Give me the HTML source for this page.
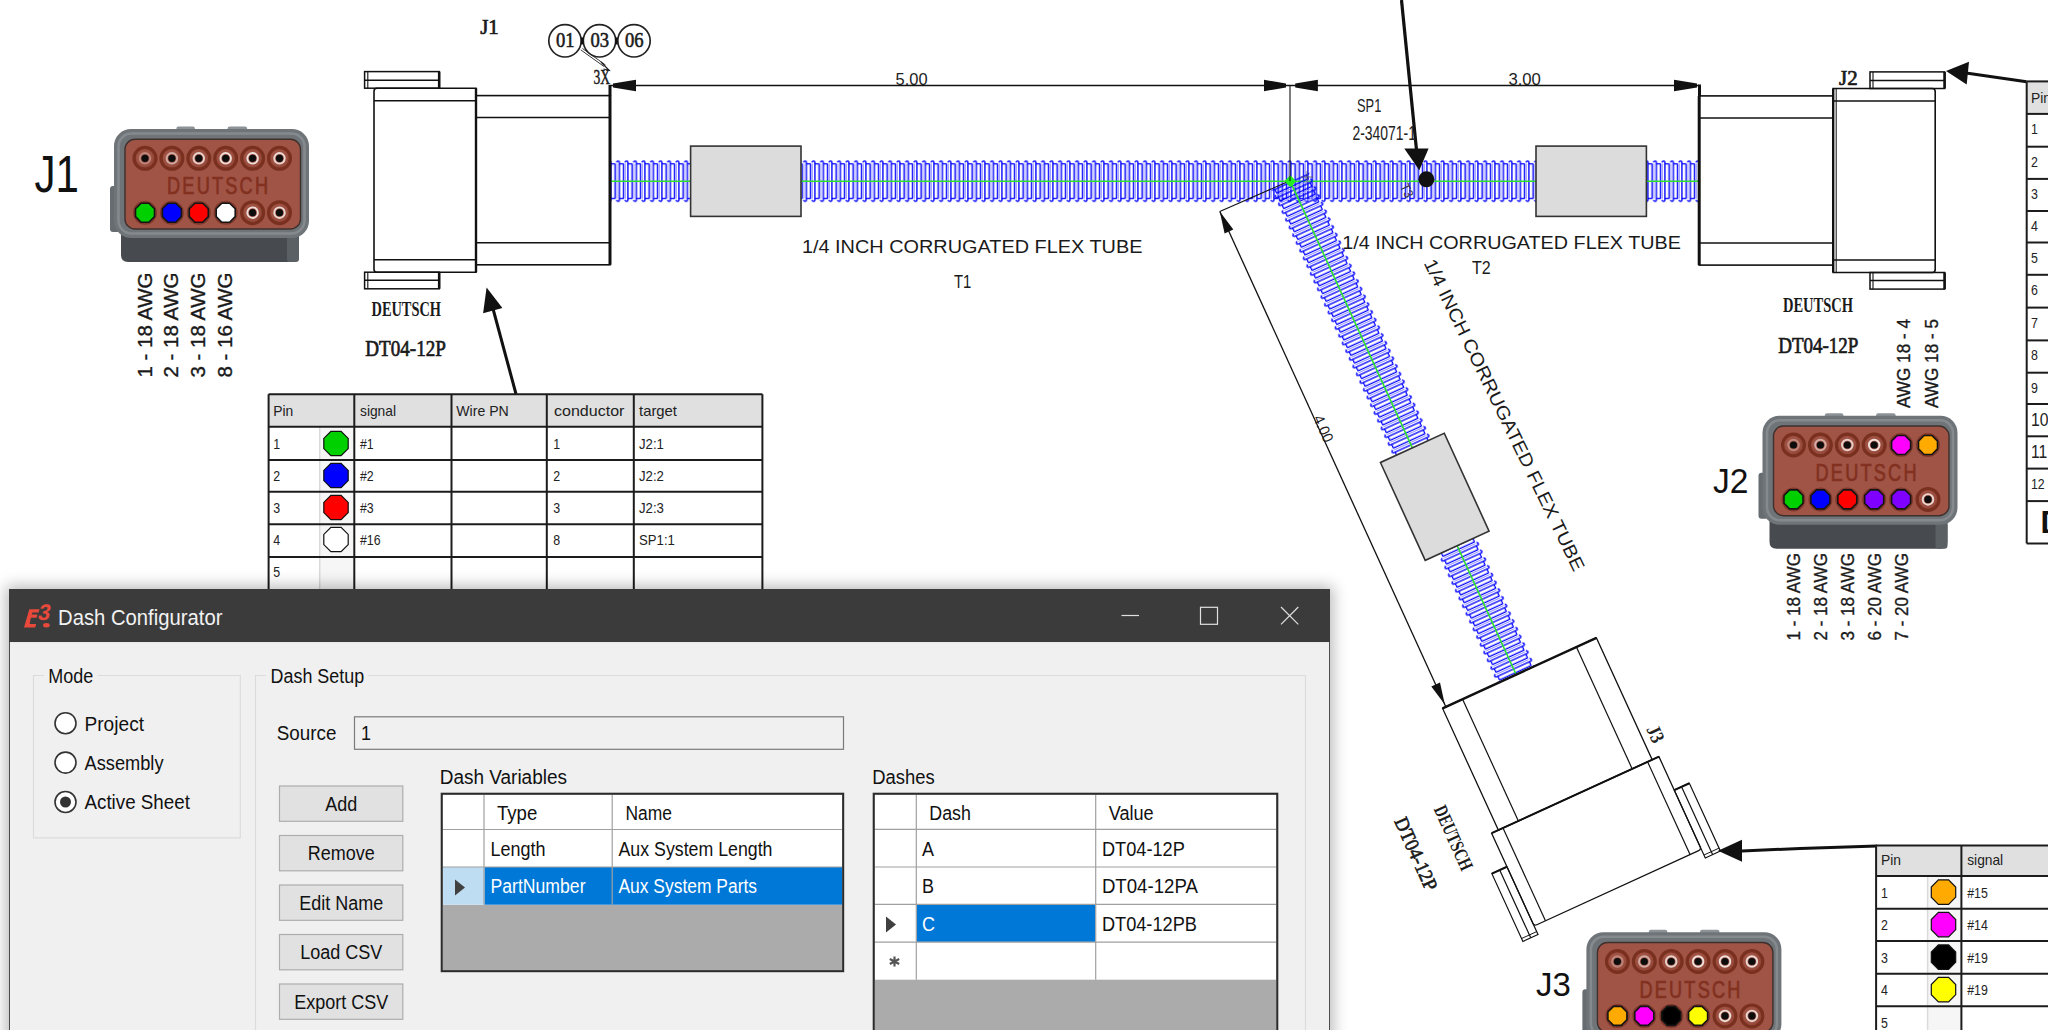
<!DOCTYPE html>
<html><head><meta charset="utf-8"><title>Dash Configurator</title>
<style>
html,body{margin:0;padding:0;background:#fff;width:2048px;height:1030px;overflow:hidden;}
svg{position:absolute;left:0;top:0;}
#dlg{position:absolute;left:9px;top:589px;width:1321px;height:460px;box-shadow:0 0 14px 3px rgba(0,0,0,0.28);background:#f0f0f0;}
</style></head><body>
<svg width="2048" height="1030" viewBox="0 0 2048 1030">
<defs>
<pattern id="corr" width="8.5" height="42" patternUnits="userSpaceOnUse" x="0" y="-21">
 <path d="M0.9,1.2 V40.8 M5.1,3.6 V38.4 M0.9,3.6 H5.1 M0.9,38.4 H5.1" stroke="#0000ff" stroke-width="1.35" fill="none"/>
 <path d="M0.9,1.4 Q-0.8,0.2 -2.2,2.2 M9.4,1.4 Q7.7,0.2 6.3,2.2 M0.9,40.6 Q-0.8,41.8 -2.2,39.8 M9.4,40.6 Q7.7,41.8 6.3,39.8" stroke="#0000ff" stroke-width="1.3" fill="none"/>
 <path d="M6.9,3.5 V38.5" stroke="#9b9bff" stroke-width="1.1"/>
</pattern>
<pattern id="corr3" width="8.5" height="42" patternUnits="userSpaceOnUse" x="0" y="-21">
 <path d="M0.9,1.2 V40.8 M5.1,3.6 V38.4 M0.9,3.6 H5.1 M0.9,38.4 H5.1" stroke="#0000ff" stroke-width="1.3" fill="none"/>
 <path d="M0.9,1.4 Q-0.8,0.2 -2.2,2.2 M9.4,1.4 Q7.7,0.2 6.3,2.2 M0.9,40.6 Q-0.8,41.8 -2.2,39.8 M9.4,40.6 Q7.7,41.8 6.3,39.8" stroke="#0000ff" stroke-width="1.4" fill="none"/>
 <path d="M7.1,3.5 V38.5" stroke="#9a9aff" stroke-width="1"/>
</pattern>
<radialGradient id="holeg" cx="0.45" cy="0.45" r="0.6">
 <stop offset="0" stop-color="#a85a4a"/><stop offset="0.55" stop-color="#9e5142"/><stop offset="1" stop-color="#8a3f30"/>
</radialGradient>
</defs>
<g transform="translate(610,181.2)"><rect x="0" y="-21" width="680.0" height="42" fill="url(#corr)" />
<line x1="0" y1="0" x2="680.0" y2="0" stroke="#2ee02e" stroke-width="1.6"/>
<rect x="80.6" y="-35.1" width="110.4" height="70.3" fill="#dcdcdc" stroke="#333" stroke-width="1.6"/></g>
<g transform="translate(1290,181.2)"><rect x="0" y="-21" width="409.0" height="42" fill="url(#corr)" />
<line x1="0" y1="0" x2="409.0" y2="0" stroke="#2ee02e" stroke-width="1.6"/>
<rect x="246.0" y="-35.1" width="110.4" height="70.3" fill="#dcdcdc" stroke="#333" stroke-width="1.6"/></g>
<g transform="translate(1290.3,181.3) rotate(65.4)"><rect x="0" y="-21" width="543.0" height="42" fill="url(#corr3)" />
<line x1="0" y1="0" x2="543.0" y2="0" stroke="#2ee02e" stroke-width="1.6"/>
<rect x="293.2" y="-35.1" width="107.6" height="70.2" fill="#dcdcdc" stroke="#333" stroke-width="1.6"/></g>
<path d="M1290.3,175.3 L1296.3,181.3 L1290.3,187.3 L1284.3,181.3 Z" fill="#22ee22"/>
<g transform="translate(610,180.2) scale(-1,1)"><rect x="0" y="-84.6" width="134" height="169.2" stroke="#111" fill="none" stroke-width="1.60"/>
<line x1="0" y1="-62.6" x2="134" y2="-62.6" stroke="#111" fill="none" stroke-width="1.50"/>
<line x1="0" y1="62.6" x2="134" y2="62.6" stroke="#111" fill="none" stroke-width="1.50"/>
<path d="M134,-92 H233 Q236,-92 236,-89 V89 Q236,92 233,92 H134 Z" stroke="#111" fill="none" stroke-width="1.60"/>
<line x1="134" y1="-79.5" x2="236" y2="-79.5" stroke="#111" fill="none" stroke-width="1.50"/>
<line x1="134" y1="79.5" x2="236" y2="79.5" stroke="#111" fill="none" stroke-width="1.50"/>
<line x1="134" y1="-92" x2="134" y2="92" stroke="#111" fill="none" stroke-width="2.40"/>
<rect x="170.8" y="-108.6" width="74.6" height="16.599999999999994" stroke="#111" fill="none" stroke-width="1.50"/>
<line x1="242.2" y1="-92" x2="242.2" y2="-108.6" stroke="#111" fill="none" stroke-width="1.10"/>
<line x1="170.8" y1="-92" x2="170.8" y2="-108.6" stroke="#111" fill="none" stroke-width="2.60"/>
<line x1="170.8" y1="-100" x2="245.4" y2="-100" stroke="#111" fill="none" stroke-width="1.50"/>
<rect x="170.8" y="92" width="74.6" height="16.599999999999994" stroke="#111" fill="none" stroke-width="1.50"/>
<line x1="242.2" y1="92" x2="242.2" y2="108.6" stroke="#111" fill="none" stroke-width="1.10"/>
<line x1="170.8" y1="92" x2="170.8" y2="108.6" stroke="#111" fill="none" stroke-width="2.60"/>
<line x1="170.8" y1="100" x2="245.4" y2="100" stroke="#111" fill="none" stroke-width="1.50"/>
<line x1="0" y1="-84.6" x2="0" y2="84.6" stroke="#111" fill="none" stroke-width="3.00"/></g>
<g transform="translate(1699.2,180.5)"><rect x="0" y="-84.6" width="134" height="169.2" stroke="#111" fill="none" stroke-width="1.60"/>
<line x1="0" y1="-62.6" x2="134" y2="-62.6" stroke="#111" fill="none" stroke-width="1.50"/>
<line x1="0" y1="62.6" x2="134" y2="62.6" stroke="#111" fill="none" stroke-width="1.50"/>
<path d="M134,-92 H233 Q236,-92 236,-89 V89 Q236,92 233,92 H134 Z" stroke="#111" fill="none" stroke-width="1.60"/>
<line x1="134" y1="-79.5" x2="236" y2="-79.5" stroke="#111" fill="none" stroke-width="1.50"/>
<line x1="134" y1="79.5" x2="236" y2="79.5" stroke="#111" fill="none" stroke-width="1.50"/>
<line x1="134" y1="-92" x2="134" y2="92" stroke="#111" fill="none" stroke-width="2.40"/>
<line x1="137" y1="-92" x2="137" y2="92" stroke="#111" fill="none" stroke-width="1.00"/>
<rect x="170.8" y="-108.6" width="74.6" height="16.599999999999994" stroke="#111" fill="none" stroke-width="1.50"/>
<line x1="173.8" y1="-92" x2="173.8" y2="-108.6" stroke="#111" fill="none" stroke-width="1.10"/>
<line x1="245.4" y1="-92" x2="245.4" y2="-108.6" stroke="#111" fill="none" stroke-width="2.60"/>
<line x1="170.8" y1="-100" x2="245.4" y2="-100" stroke="#111" fill="none" stroke-width="1.50"/>
<rect x="170.8" y="92" width="74.6" height="16.599999999999994" stroke="#111" fill="none" stroke-width="1.50"/>
<line x1="173.8" y1="92" x2="173.8" y2="108.6" stroke="#111" fill="none" stroke-width="1.10"/>
<line x1="245.4" y1="92" x2="245.4" y2="108.6" stroke="#111" fill="none" stroke-width="2.60"/>
<line x1="170.8" y1="100" x2="245.4" y2="100" stroke="#111" fill="none" stroke-width="1.50"/>
<line x1="0" y1="-84.6" x2="0" y2="84.6" stroke="#111" fill="none" stroke-width="3.00"/></g>
<g transform="translate(1519.5,673.1) rotate(65.4)"><rect x="0" y="-84.6" width="134" height="169.2" stroke="#111" fill="none" stroke-width="1.28"/>
<line x1="0" y1="-62.6" x2="134" y2="-62.6" stroke="#111" fill="none" stroke-width="1.20"/>
<line x1="0" y1="62.6" x2="134" y2="62.6" stroke="#111" fill="none" stroke-width="1.20"/>
<path d="M134,-92 H233 Q236,-92 236,-89 V89 Q236,92 233,92 H134 Z" stroke="#111" fill="none" stroke-width="1.28"/>
<line x1="134" y1="-79.5" x2="236" y2="-79.5" stroke="#111" fill="none" stroke-width="1.20"/>
<line x1="134" y1="79.5" x2="236" y2="79.5" stroke="#111" fill="none" stroke-width="1.20"/>
<line x1="134" y1="-92" x2="134" y2="92" stroke="#111" fill="none" stroke-width="1.92"/>
<rect x="170.8" y="-108.6" width="74.6" height="16.599999999999994" stroke="#111" fill="none" stroke-width="1.20"/>
<line x1="242.2" y1="-92" x2="242.2" y2="-108.6" stroke="#111" fill="none" stroke-width="0.88"/>
<line x1="170.8" y1="-92" x2="170.8" y2="-108.6" stroke="#111" fill="none" stroke-width="2.08"/>
<line x1="170.8" y1="-100" x2="245.4" y2="-100" stroke="#111" fill="none" stroke-width="1.20"/>
<rect x="170.8" y="92" width="74.6" height="16.599999999999994" stroke="#111" fill="none" stroke-width="1.20"/>
<line x1="242.2" y1="92" x2="242.2" y2="108.6" stroke="#111" fill="none" stroke-width="0.88"/>
<line x1="170.8" y1="92" x2="170.8" y2="108.6" stroke="#111" fill="none" stroke-width="2.08"/>
<line x1="170.8" y1="100" x2="245.4" y2="100" stroke="#111" fill="none" stroke-width="1.20"/>
<line x1="0" y1="-84.6" x2="0" y2="84.6" stroke="#111" fill="none" stroke-width="2.40"/></g>
<line x1="610" y1="85.5" x2="1699" y2="85.5" stroke="#111" stroke-width="1.4"/>
<path d="M613.0,83.5 L636.0,79.8 L636.0,91.2 L613.0,87.5 Z" fill="#111"/>
<path d="M1286.0,87.5 L1264.0,91.2 L1264.0,79.8 L1286.0,83.5 Z" fill="#111"/>
<path d="M1295.2,83.5 L1317.9,79.8 L1317.9,91.2 L1295.2,87.5 Z" fill="#111"/>
<path d="M1697.0,87.5 L1674.0,91.2 L1674.0,79.8 L1697.0,83.5 Z" fill="#111"/>
<line x1="1290" y1="85.5" x2="1290" y2="181" stroke="#111" stroke-width="1.1"/>
<line x1="1699.5" y1="84.5" x2="1699.5" y2="96" stroke="#111" stroke-width="3"/>
<line x1="610" y1="85" x2="610" y2="96" stroke="#111" stroke-width="3"/>
<text x="895.6" y="85.0" font-family='"Liberation Sans", sans-serif' font-size="17" fill="#222" textLength="32.0" lengthAdjust="spacingAndGlyphs">5.00</text>
<text x="1508.4" y="85.4" font-family='"Liberation Sans", sans-serif' font-size="17" fill="#222" textLength="32.5" lengthAdjust="spacingAndGlyphs">3.00</text>
<line x1="1286" y1="182.5" x2="1219.8" y2="211.5" stroke="#111" stroke-width="1.1"/>
<line x1="1219.8" y1="211.5" x2="1445.7" y2="706.5" stroke="#111" stroke-width="1.3"/>
<path d="M1219.8,211.5 L1233.3,229.5 L1224.6,233.5 Z" fill="#111"/>
<path d="M1444.8,704.5 L1431.3,686.5 L1440.0,682.5 Z" fill="#111"/>
<text x="0.0" y="0.0" font-family='"Liberation Sans", sans-serif' font-size="15" fill="#222" textLength="28.0" lengthAdjust="spacingAndGlyphs" transform="translate(1313,418) rotate(65.4)">4.00</text>
<line x1="1401.5" y1="0" x2="1416.5" y2="150" stroke="#111" stroke-width="3.2"/>
<path d="M1419.3,170.3 L1404.3,148.5 L1428.6,148.5 Z" fill="#111"/>
<circle cx="1426.4" cy="179.3" r="8" fill="#111"/>
<text x="1357.0" y="111.9" font-family='"Liberation Sans", sans-serif' font-size="19" fill="#222" textLength="24.3" lengthAdjust="spacingAndGlyphs">SP1</text>
<text x="1352.4" y="139.8" font-family='"Liberation Sans", sans-serif' font-size="20" fill="#222" textLength="63.6" lengthAdjust="spacingAndGlyphs">2-34071-1</text>
<text x="0.0" y="0.0" font-family='"Liberation Sans", sans-serif' font-size="13" fill="#333" textLength="14.0" lengthAdjust="spacingAndGlyphs" transform="translate(1400,186) rotate(65.4)">T3</text>
<path d="M1307,171 V183 M1301,177 H1313" stroke="#555" stroke-width="0.8"/>
<text x="801.9" y="252.5" font-family='"Liberation Sans", sans-serif' font-size="18.5" fill="#1a1a1a" textLength="340.6" lengthAdjust="spacingAndGlyphs">1/4 INCH CORRUGATED FLEX TUBE</text>
<text x="954.0" y="287.5" font-family='"Liberation Sans", sans-serif' font-size="18.5" fill="#1a1a1a" textLength="17.3" lengthAdjust="spacingAndGlyphs">T1</text>
<text x="1342.2" y="248.6" font-family='"Liberation Sans", sans-serif' font-size="18.5" fill="#1a1a1a" textLength="338.7" lengthAdjust="spacingAndGlyphs">1/4 INCH CORRUGATED FLEX TUBE</text>
<text x="1472.0" y="274.3" font-family='"Liberation Sans", sans-serif' font-size="18.5" fill="#1a1a1a" textLength="18.7" lengthAdjust="spacingAndGlyphs">T2</text>
<text x="0.0" y="0.0" font-family='"Liberation Sans", sans-serif' font-size="18.5" fill="#1a1a1a" textLength="344.0" lengthAdjust="spacingAndGlyphs" transform="translate(1423.5,263) rotate(64.1)">1/4 INCH CORRUGATED FLEX TUBE</text>
<circle cx="565" cy="40.8" r="16.2" fill="#fff" stroke="#222" stroke-width="1.7"/>
<text x="565.2" y="47.2" font-family='"Liberation Serif", serif' font-size="22" fill="#1a1a1a" textLength="18.6" lengthAdjust="spacingAndGlyphs" text-anchor="middle" stroke="#1a1a1a" stroke-width="0.6">01</text>
<circle cx="599.5" cy="40.8" r="16.2" fill="#fff" stroke="#222" stroke-width="1.7"/>
<text x="599.7" y="47.2" font-family='"Liberation Serif", serif' font-size="22" fill="#1a1a1a" textLength="18.6" lengthAdjust="spacingAndGlyphs" text-anchor="middle" stroke="#1a1a1a" stroke-width="0.6">03</text>
<circle cx="634" cy="40.8" r="16.2" fill="#fff" stroke="#222" stroke-width="1.7"/>
<text x="634.2" y="47.2" font-family='"Liberation Serif", serif' font-size="22" fill="#1a1a1a" textLength="18.6" lengthAdjust="spacingAndGlyphs" text-anchor="middle" stroke="#1a1a1a" stroke-width="0.6">06</text>
<rect x="580.8" y="37.4" width="2.8" height="7" fill="#111"/><rect x="615.2" y="37.4" width="2.5" height="7" fill="#111"/>
<path d="M580.8,49.9 L604,66.5 M582.5,48.5 L605.5,65" stroke="#222" stroke-width="0.9"/><path d="M601,62 L609,70.3 L603.5,69" stroke="#222" stroke-width="1.2" fill="none"/>
<text x="593.4" y="84.2" font-family='"Liberation Serif", serif' font-size="21" fill="#1a1a1a" textLength="16.6" lengthAdjust="spacingAndGlyphs" stroke="#1a1a1a" stroke-width="0.5">3X</text>
<text x="480.2" y="33.7" font-family='"Liberation Serif", serif' font-size="22" fill="#1a1a1a" textLength="18.6" lengthAdjust="spacingAndGlyphs" stroke="#1a1a1a" stroke-width="0.7">J1</text>
<text x="1839.0" y="84.6" font-family='"Liberation Serif", serif' font-size="21" fill="#1a1a1a" textLength="18.6" lengthAdjust="spacingAndGlyphs" stroke="#1a1a1a" stroke-width="0.7">J2</text>
<text x="371.5" y="315.6" font-family='"Liberation Serif", serif' font-size="21.5" font-weight="bold" fill="#1a1a1a" textLength="69.5" lengthAdjust="spacingAndGlyphs">DEUTSCH</text>
<text x="365.3" y="356.4" font-family='"Liberation Serif", serif' font-size="22.5" fill="#1a1a1a" textLength="80.5" lengthAdjust="spacingAndGlyphs" stroke="#1a1a1a" stroke-width="0.7">DT04-12P</text>
<text x="1783.0" y="312.3" font-family='"Liberation Serif", serif' font-size="21.5" font-weight="bold" fill="#1a1a1a" textLength="70.0" lengthAdjust="spacingAndGlyphs">DEUTSCH</text>
<text x="1778.2" y="353.0" font-family='"Liberation Serif", serif' font-size="22.5" fill="#1a1a1a" textLength="80.2" lengthAdjust="spacingAndGlyphs" stroke="#1a1a1a" stroke-width="0.7">DT04-12P</text>
<text x="0.0" y="0.0" font-family='"Liberation Serif", serif' font-size="20" font-weight="bold" fill="#222" textLength="17.0" lengthAdjust="spacingAndGlyphs" transform="translate(1646,729) rotate(65.4)">J3</text>
<text x="0.0" y="0.0" font-family='"Liberation Serif", serif' font-size="19.5" font-weight="bold" fill="#1a1a1a" textLength="69.0" lengthAdjust="spacingAndGlyphs" transform="translate(1433.5,809) rotate(65.8)">DEUTSCH</text>
<text x="0.0" y="0.0" font-family='"Liberation Serif", serif' font-size="20" fill="#1a1a1a" textLength="78.0" lengthAdjust="spacingAndGlyphs" transform="translate(1394,821) rotate(65.8)" stroke="#1a1a1a" stroke-width="0.6">DT04-12P</text>
<line x1="516" y1="394" x2="492" y2="305" stroke="#111" stroke-width="3"/>
<path d="M486.6,287.4 L502.4,308.0 L483.1,313.2 Z" fill="#111"/>
<polyline points="2026.6,81.8 1966,73" fill="none" stroke="#111" stroke-width="3"/>
<path d="M1946.0,70.9 L1969.0,61.7 L1966.7,84.6 Z" fill="#111"/>
<polyline points="1877,846 1800,848.5 1742,851" fill="none" stroke="#111" stroke-width="3"/>
<path d="M1718.0,850.8 L1742.0,839.8 L1742.0,861.8 Z" fill="#111"/>
<g transform="translate(0,0)">
<rect x="176.4" y="126.5" width="18.5" height="7" rx="2" fill="#8d9297"/>
<rect x="227.6" y="126.5" width="19.5" height="7" rx="2" fill="#8d9297"/>
<path d="M121,225 H299 V255 Q299,262 292,262 H128 Q121,262 121,255 Z" fill="#474b4f"/>
<rect x="287" y="236" width="12" height="26" rx="3" fill="#5b6065"/>
<rect x="110" y="186" width="10" height="46" rx="3" fill="#676c71"/>
<rect x="114" y="129" width="195" height="109" rx="17" fill="#6f7479"/>
<rect x="118.5" y="133.5" width="186" height="100" rx="13" fill="none" stroke="#858a8f" stroke-width="2.5"/>
<rect x="125" y="139.3" width="175.5" height="89.7" rx="10" fill="#9f5446" stroke="#3e302d" stroke-width="1.4"/>
<g transform="translate(217.5,194.3) scale(0.74,1)"><text x="0" y="0" font-family='"Liberation Sans", sans-serif' font-size="24.5" fill="#82301f" stroke="#82301f" stroke-width="0.7" text-anchor="middle" textLength="136.5" lengthAdjust="spacing">DEUTSCH</text></g>
<circle cx="145.0" cy="158.3" r="10.9" fill="url(#holeg)" stroke="#79301f" stroke-width="3.2"/>
<circle cx="145.0" cy="158.3" r="5.3" fill="none" stroke="#f3e6e2" stroke-width="1.9" stroke-opacity="0.35"/>
<circle cx="145.0" cy="158.3" r="3.6" fill="#0d0d0d"/>
<circle cx="145.0" cy="212.7" r="12" fill="#80382b"/>
<polygon points="154.5,216.6 148.9,222.2 141.1,222.2 135.5,216.6 135.5,208.8 141.1,203.2 148.9,203.2 154.5,208.8" fill="#00d000" stroke="#141414" stroke-width="1.6" stroke-linejoin="round"/>
<circle cx="171.9" cy="158.3" r="10.9" fill="url(#holeg)" stroke="#79301f" stroke-width="3.2"/>
<circle cx="171.9" cy="158.3" r="5.3" fill="none" stroke="#f3e6e2" stroke-width="1.9" stroke-opacity="0.6"/>
<circle cx="171.9" cy="158.3" r="3.6" fill="#0d0d0d"/>
<circle cx="171.9" cy="212.7" r="12" fill="#80382b"/>
<polygon points="181.4,216.6 175.8,222.2 168.0,222.2 162.4,216.6 162.4,208.8 168.0,203.2 175.8,203.2 181.4,208.8" fill="#0000ff" stroke="#141414" stroke-width="1.6" stroke-linejoin="round"/>
<circle cx="198.8" cy="158.3" r="10.9" fill="url(#holeg)" stroke="#79301f" stroke-width="3.2"/>
<circle cx="198.8" cy="158.3" r="5.3" fill="none" stroke="#f3e6e2" stroke-width="1.9" stroke-opacity="0.85"/>
<circle cx="198.8" cy="158.3" r="3.6" fill="#0d0d0d"/>
<circle cx="198.8" cy="212.7" r="12" fill="#80382b"/>
<polygon points="208.3,216.6 202.7,222.2 194.9,222.2 189.3,216.6 189.3,208.8 194.9,203.2 202.7,203.2 208.3,208.8" fill="#ff0000" stroke="#141414" stroke-width="1.6" stroke-linejoin="round"/>
<circle cx="225.7" cy="158.3" r="10.9" fill="url(#holeg)" stroke="#79301f" stroke-width="3.2"/>
<circle cx="225.7" cy="158.3" r="5.3" fill="none" stroke="#f3e6e2" stroke-width="1.9" stroke-opacity="0.95"/>
<circle cx="225.7" cy="158.3" r="3.6" fill="#0d0d0d"/>
<circle cx="225.7" cy="212.7" r="12" fill="#80382b"/>
<polygon points="235.2,216.6 229.6,222.2 221.8,222.2 216.2,216.6 216.2,208.8 221.8,203.2 229.6,203.2 235.2,208.8" fill="#ffffff" stroke="#141414" stroke-width="1.6" stroke-linejoin="round"/>
<circle cx="252.6" cy="158.3" r="10.9" fill="url(#holeg)" stroke="#79301f" stroke-width="3.2"/>
<circle cx="252.6" cy="158.3" r="5.3" fill="none" stroke="#f3e6e2" stroke-width="1.9" stroke-opacity="0.95"/>
<circle cx="252.6" cy="158.3" r="3.6" fill="#0d0d0d"/>
<circle cx="252.6" cy="212.7" r="10.9" fill="url(#holeg)" stroke="#79301f" stroke-width="3.2"/>
<circle cx="252.6" cy="212.7" r="5.3" fill="none" stroke="#f3e6e2" stroke-width="1.9" stroke-opacity="0.95"/>
<circle cx="252.6" cy="212.7" r="3.6" fill="#0d0d0d"/>
<circle cx="279.5" cy="158.3" r="10.9" fill="url(#holeg)" stroke="#79301f" stroke-width="3.2"/>
<circle cx="279.5" cy="158.3" r="5.3" fill="none" stroke="#f3e6e2" stroke-width="1.9" stroke-opacity="0.9"/>
<circle cx="279.5" cy="158.3" r="3.6" fill="#0d0d0d"/>
<circle cx="279.5" cy="212.7" r="10.9" fill="url(#holeg)" stroke="#79301f" stroke-width="3.2"/>
<circle cx="279.5" cy="212.7" r="5.3" fill="none" stroke="#f3e6e2" stroke-width="1.9" stroke-opacity="0.9"/>
<circle cx="279.5" cy="212.7" r="3.6" fill="#0d0d0d"/>
</g>
<g transform="translate(1648.5,286.7)">
<rect x="176.4" y="126.5" width="18.5" height="7" rx="2" fill="#8d9297"/>
<rect x="227.6" y="126.5" width="19.5" height="7" rx="2" fill="#8d9297"/>
<path d="M121,225 H299 V255 Q299,262 292,262 H128 Q121,262 121,255 Z" fill="#474b4f"/>
<rect x="287" y="236" width="12" height="26" rx="3" fill="#5b6065"/>
<rect x="110" y="186" width="10" height="46" rx="3" fill="#676c71"/>
<rect x="114" y="129" width="195" height="109" rx="17" fill="#6f7479"/>
<rect x="118.5" y="133.5" width="186" height="100" rx="13" fill="none" stroke="#858a8f" stroke-width="2.5"/>
<rect x="125" y="139.3" width="175.5" height="89.7" rx="10" fill="#9f5446" stroke="#3e302d" stroke-width="1.4"/>
<g transform="translate(217.5,194.3) scale(0.74,1)"><text x="0" y="0" font-family='"Liberation Sans", sans-serif' font-size="24.5" fill="#82301f" stroke="#82301f" stroke-width="0.7" text-anchor="middle" textLength="136.5" lengthAdjust="spacing">DEUTSCH</text></g>
<circle cx="145.0" cy="158.3" r="10.9" fill="url(#holeg)" stroke="#79301f" stroke-width="3.2"/>
<circle cx="145.0" cy="158.3" r="5.3" fill="none" stroke="#f3e6e2" stroke-width="1.9" stroke-opacity="0.35"/>
<circle cx="145.0" cy="158.3" r="3.6" fill="#0d0d0d"/>
<circle cx="145.0" cy="212.7" r="12" fill="#80382b"/>
<polygon points="154.5,216.6 148.9,222.2 141.1,222.2 135.5,216.6 135.5,208.8 141.1,203.2 148.9,203.2 154.5,208.8" fill="#00d000" stroke="#141414" stroke-width="1.6" stroke-linejoin="round"/>
<circle cx="171.9" cy="158.3" r="10.9" fill="url(#holeg)" stroke="#79301f" stroke-width="3.2"/>
<circle cx="171.9" cy="158.3" r="5.3" fill="none" stroke="#f3e6e2" stroke-width="1.9" stroke-opacity="0.6"/>
<circle cx="171.9" cy="158.3" r="3.6" fill="#0d0d0d"/>
<circle cx="171.9" cy="212.7" r="12" fill="#80382b"/>
<polygon points="181.4,216.6 175.8,222.2 168.0,222.2 162.4,216.6 162.4,208.8 168.0,203.2 175.8,203.2 181.4,208.8" fill="#0000ff" stroke="#141414" stroke-width="1.6" stroke-linejoin="round"/>
<circle cx="198.8" cy="158.3" r="10.9" fill="url(#holeg)" stroke="#79301f" stroke-width="3.2"/>
<circle cx="198.8" cy="158.3" r="5.3" fill="none" stroke="#f3e6e2" stroke-width="1.9" stroke-opacity="0.85"/>
<circle cx="198.8" cy="158.3" r="3.6" fill="#0d0d0d"/>
<circle cx="198.8" cy="212.7" r="12" fill="#80382b"/>
<polygon points="208.3,216.6 202.7,222.2 194.9,222.2 189.3,216.6 189.3,208.8 194.9,203.2 202.7,203.2 208.3,208.8" fill="#ff0000" stroke="#141414" stroke-width="1.6" stroke-linejoin="round"/>
<circle cx="225.7" cy="158.3" r="10.9" fill="url(#holeg)" stroke="#79301f" stroke-width="3.2"/>
<circle cx="225.7" cy="158.3" r="5.3" fill="none" stroke="#f3e6e2" stroke-width="1.9" stroke-opacity="0.95"/>
<circle cx="225.7" cy="158.3" r="3.6" fill="#0d0d0d"/>
<circle cx="225.7" cy="212.7" r="12" fill="#80382b"/>
<polygon points="235.2,216.6 229.6,222.2 221.8,222.2 216.2,216.6 216.2,208.8 221.8,203.2 229.6,203.2 235.2,208.8" fill="#8000ff" stroke="#141414" stroke-width="1.6" stroke-linejoin="round"/>
<circle cx="252.6" cy="158.3" r="12" fill="#80382b"/>
<polygon points="262.1,162.2 256.5,167.8 248.7,167.8 243.1,162.2 243.1,154.4 248.7,148.8 256.5,148.8 262.1,154.4" fill="#ff00ff" stroke="#141414" stroke-width="1.6" stroke-linejoin="round"/>
<circle cx="252.6" cy="212.7" r="12" fill="#80382b"/>
<polygon points="262.1,216.6 256.5,222.2 248.7,222.2 243.1,216.6 243.1,208.8 248.7,203.2 256.5,203.2 262.1,208.8" fill="#8000ff" stroke="#141414" stroke-width="1.6" stroke-linejoin="round"/>
<circle cx="279.5" cy="158.3" r="12" fill="#80382b"/>
<polygon points="289.0,162.2 283.4,167.8 275.6,167.8 270.0,162.2 270.0,154.4 275.6,148.8 283.4,148.8 289.0,154.4" fill="#ffaa00" stroke="#141414" stroke-width="1.6" stroke-linejoin="round"/>
<circle cx="279.5" cy="212.7" r="10.9" fill="url(#holeg)" stroke="#79301f" stroke-width="3.2"/>
<circle cx="279.5" cy="212.7" r="5.3" fill="none" stroke="#f3e6e2" stroke-width="1.9" stroke-opacity="0.9"/>
<circle cx="279.5" cy="212.7" r="3.6" fill="#0d0d0d"/>
</g>
<g transform="translate(1472.4,803.2)">
<rect x="176.4" y="126.5" width="18.5" height="7" rx="2" fill="#8d9297"/>
<rect x="227.6" y="126.5" width="19.5" height="7" rx="2" fill="#8d9297"/>
<path d="M121,225 H299 V255 Q299,262 292,262 H128 Q121,262 121,255 Z" fill="#474b4f"/>
<rect x="287" y="236" width="12" height="26" rx="3" fill="#5b6065"/>
<rect x="110" y="186" width="10" height="46" rx="3" fill="#676c71"/>
<rect x="114" y="129" width="195" height="109" rx="17" fill="#6f7479"/>
<rect x="118.5" y="133.5" width="186" height="100" rx="13" fill="none" stroke="#858a8f" stroke-width="2.5"/>
<rect x="125" y="139.3" width="175.5" height="89.7" rx="10" fill="#9f5446" stroke="#3e302d" stroke-width="1.4"/>
<g transform="translate(217.5,194.3) scale(0.74,1)"><text x="0" y="0" font-family='"Liberation Sans", sans-serif' font-size="24.5" fill="#82301f" stroke="#82301f" stroke-width="0.7" text-anchor="middle" textLength="136.5" lengthAdjust="spacing">DEUTSCH</text></g>
<circle cx="145.0" cy="158.3" r="10.9" fill="url(#holeg)" stroke="#79301f" stroke-width="3.2"/>
<circle cx="145.0" cy="158.3" r="5.3" fill="none" stroke="#f3e6e2" stroke-width="1.9" stroke-opacity="0.35"/>
<circle cx="145.0" cy="158.3" r="3.6" fill="#0d0d0d"/>
<circle cx="145.0" cy="212.7" r="12" fill="#80382b"/>
<polygon points="154.5,216.6 148.9,222.2 141.1,222.2 135.5,216.6 135.5,208.8 141.1,203.2 148.9,203.2 154.5,208.8" fill="#ffaa00" stroke="#141414" stroke-width="1.6" stroke-linejoin="round"/>
<circle cx="171.9" cy="158.3" r="10.9" fill="url(#holeg)" stroke="#79301f" stroke-width="3.2"/>
<circle cx="171.9" cy="158.3" r="5.3" fill="none" stroke="#f3e6e2" stroke-width="1.9" stroke-opacity="0.6"/>
<circle cx="171.9" cy="158.3" r="3.6" fill="#0d0d0d"/>
<circle cx="171.9" cy="212.7" r="12" fill="#80382b"/>
<polygon points="181.4,216.6 175.8,222.2 168.0,222.2 162.4,216.6 162.4,208.8 168.0,203.2 175.8,203.2 181.4,208.8" fill="#ff00ff" stroke="#141414" stroke-width="1.6" stroke-linejoin="round"/>
<circle cx="198.8" cy="158.3" r="10.9" fill="url(#holeg)" stroke="#79301f" stroke-width="3.2"/>
<circle cx="198.8" cy="158.3" r="5.3" fill="none" stroke="#f3e6e2" stroke-width="1.9" stroke-opacity="0.85"/>
<circle cx="198.8" cy="158.3" r="3.6" fill="#0d0d0d"/>
<circle cx="198.8" cy="212.7" r="12" fill="#80382b"/>
<polygon points="208.3,216.6 202.7,222.2 194.9,222.2 189.3,216.6 189.3,208.8 194.9,203.2 202.7,203.2 208.3,208.8" fill="#000000" stroke="#141414" stroke-width="1.6" stroke-linejoin="round"/>
<circle cx="225.7" cy="158.3" r="10.9" fill="url(#holeg)" stroke="#79301f" stroke-width="3.2"/>
<circle cx="225.7" cy="158.3" r="5.3" fill="none" stroke="#f3e6e2" stroke-width="1.9" stroke-opacity="0.95"/>
<circle cx="225.7" cy="158.3" r="3.6" fill="#0d0d0d"/>
<circle cx="225.7" cy="212.7" r="12" fill="#80382b"/>
<polygon points="235.2,216.6 229.6,222.2 221.8,222.2 216.2,216.6 216.2,208.8 221.8,203.2 229.6,203.2 235.2,208.8" fill="#ffff00" stroke="#141414" stroke-width="1.6" stroke-linejoin="round"/>
<circle cx="252.6" cy="158.3" r="10.9" fill="url(#holeg)" stroke="#79301f" stroke-width="3.2"/>
<circle cx="252.6" cy="158.3" r="5.3" fill="none" stroke="#f3e6e2" stroke-width="1.9" stroke-opacity="0.95"/>
<circle cx="252.6" cy="158.3" r="3.6" fill="#0d0d0d"/>
<circle cx="252.6" cy="212.7" r="10.9" fill="url(#holeg)" stroke="#79301f" stroke-width="3.2"/>
<circle cx="252.6" cy="212.7" r="5.3" fill="none" stroke="#f3e6e2" stroke-width="1.9" stroke-opacity="0.95"/>
<circle cx="252.6" cy="212.7" r="3.6" fill="#0d0d0d"/>
<circle cx="279.5" cy="158.3" r="10.9" fill="url(#holeg)" stroke="#79301f" stroke-width="3.2"/>
<circle cx="279.5" cy="158.3" r="5.3" fill="none" stroke="#f3e6e2" stroke-width="1.9" stroke-opacity="0.9"/>
<circle cx="279.5" cy="158.3" r="3.6" fill="#0d0d0d"/>
<circle cx="279.5" cy="212.7" r="10.9" fill="url(#holeg)" stroke="#79301f" stroke-width="3.2"/>
<circle cx="279.5" cy="212.7" r="5.3" fill="none" stroke="#f3e6e2" stroke-width="1.9" stroke-opacity="0.9"/>
<circle cx="279.5" cy="212.7" r="3.6" fill="#0d0d0d"/>
</g>
<text x="34.5" y="191.5" font-family='"Liberation Sans", sans-serif' font-size="51.5" fill="#111" textLength="44.5" lengthAdjust="spacingAndGlyphs">J1</text>
<text x="1713.0" y="492.6" font-family='"Liberation Sans", sans-serif' font-size="35.5" fill="#111" textLength="35.5" lengthAdjust="spacingAndGlyphs">J2</text>
<text x="1536.0" y="996.0" font-family='"Liberation Sans", sans-serif' font-size="33" fill="#111" textLength="34.8" lengthAdjust="spacingAndGlyphs">J3</text>
<text x="0.0" y="0.0" font-family='"Liberation Sans", sans-serif' font-size="20.5" fill="#1a1a1a" textLength="105.0" lengthAdjust="spacingAndGlyphs" transform="translate(151.6,377.5) rotate(-90)" stroke="#1a1a1a" stroke-width="0.35">1 - 18 AWG</text>
<text x="0.0" y="0.0" font-family='"Liberation Sans", sans-serif' font-size="20.5" fill="#1a1a1a" textLength="105.0" lengthAdjust="spacingAndGlyphs" transform="translate(178.3,377.5) rotate(-90)" stroke="#1a1a1a" stroke-width="0.35">2 - 18 AWG</text>
<text x="0.0" y="0.0" font-family='"Liberation Sans", sans-serif' font-size="20.5" fill="#1a1a1a" textLength="105.0" lengthAdjust="spacingAndGlyphs" transform="translate(205.0,377.5) rotate(-90)" stroke="#1a1a1a" stroke-width="0.35">3 - 18 AWG</text>
<text x="0.0" y="0.0" font-family='"Liberation Sans", sans-serif' font-size="20.5" fill="#1a1a1a" textLength="105.0" lengthAdjust="spacingAndGlyphs" transform="translate(231.7,377.5) rotate(-90)" stroke="#1a1a1a" stroke-width="0.35">8 - 16 AWG</text>
<text x="0.0" y="0.0" font-family='"Liberation Sans", sans-serif' font-size="18" fill="#1a1a1a" textLength="87.4" lengthAdjust="spacingAndGlyphs" transform="translate(1800.3,640.5) rotate(-90)" stroke="#1a1a1a" stroke-width="0.35">1 - 18 AWG</text>
<text x="0.0" y="0.0" font-family='"Liberation Sans", sans-serif' font-size="18" fill="#1a1a1a" textLength="87.4" lengthAdjust="spacingAndGlyphs" transform="translate(1827.2,640.5) rotate(-90)" stroke="#1a1a1a" stroke-width="0.35">2 - 18 AWG</text>
<text x="0.0" y="0.0" font-family='"Liberation Sans", sans-serif' font-size="18" fill="#1a1a1a" textLength="87.4" lengthAdjust="spacingAndGlyphs" transform="translate(1854.1,640.5) rotate(-90)" stroke="#1a1a1a" stroke-width="0.35">3 - 18 AWG</text>
<text x="0.0" y="0.0" font-family='"Liberation Sans", sans-serif' font-size="18" fill="#1a1a1a" textLength="87.4" lengthAdjust="spacingAndGlyphs" transform="translate(1881.0,640.5) rotate(-90)" stroke="#1a1a1a" stroke-width="0.35">6 - 20 AWG</text>
<text x="0.0" y="0.0" font-family='"Liberation Sans", sans-serif' font-size="18" fill="#1a1a1a" textLength="87.4" lengthAdjust="spacingAndGlyphs" transform="translate(1907.9,640.5) rotate(-90)" stroke="#1a1a1a" stroke-width="0.35">7 - 20 AWG</text>
<text x="0.0" y="0.0" font-family='"Liberation Sans", sans-serif' font-size="18" fill="#1a1a1a" textLength="89.0" lengthAdjust="spacingAndGlyphs" transform="translate(1910.2,408.0) rotate(-90)" stroke="#1a1a1a" stroke-width="0.35">AWG 18 - 4</text>
<text x="0.0" y="0.0" font-family='"Liberation Sans", sans-serif' font-size="18" fill="#1a1a1a" textLength="89.0" lengthAdjust="spacingAndGlyphs" transform="translate(1937.5,408.0) rotate(-90)" stroke="#1a1a1a" stroke-width="0.35">AWG 18 - 5</text>
<rect x="268.6" y="394.2" width="493.79999999999995" height="32.60000000000002" fill="#e0e0e0"/>
<rect x="320" y="427.5" width="34" height="162" fill="#f6f6f6"/>
<line x1="319.7" y1="427" x2="319.7" y2="589" stroke="#dadada" stroke-width="1.5"/>
<line x1="268.6" y1="394.2" x2="762.4" y2="394.2" stroke="#1c1c1c" stroke-width="2"/>
<line x1="268.6" y1="426.8" x2="762.4" y2="426.8" stroke="#1c1c1c" stroke-width="2"/>
<line x1="268.6" y1="460" x2="762.4" y2="460" stroke="#1c1c1c" stroke-width="2"/>
<line x1="268.6" y1="491.8" x2="762.4" y2="491.8" stroke="#1c1c1c" stroke-width="2"/>
<line x1="268.6" y1="524.2" x2="762.4" y2="524.2" stroke="#1c1c1c" stroke-width="2"/>
<line x1="268.6" y1="557" x2="762.4" y2="557" stroke="#1c1c1c" stroke-width="2"/>
<line x1="268.6" y1="394.2" x2="268.6" y2="589" stroke="#1c1c1c" stroke-width="2"/>
<line x1="354.3" y1="394.2" x2="354.3" y2="589" stroke="#1c1c1c" stroke-width="2"/>
<line x1="451.5" y1="394.2" x2="451.5" y2="589" stroke="#1c1c1c" stroke-width="2"/>
<line x1="546.8" y1="394.2" x2="546.8" y2="589" stroke="#1c1c1c" stroke-width="2"/>
<line x1="633.8" y1="394.2" x2="633.8" y2="589" stroke="#1c1c1c" stroke-width="2"/>
<line x1="762.4" y1="394.2" x2="762.4" y2="589" stroke="#1c1c1c" stroke-width="2"/>
<text x="273.3" y="416.2" font-family='"Liberation Sans", sans-serif' font-size="14.5" fill="#222" textLength="20.0" lengthAdjust="spacingAndGlyphs">Pin</text>
<text x="360.0" y="416.2" font-family='"Liberation Sans", sans-serif' font-size="14.5" fill="#222" textLength="36.0" lengthAdjust="spacingAndGlyphs">signal</text>
<text x="456.3" y="416.2" font-family='"Liberation Sans", sans-serif' font-size="14.5" fill="#222" textLength="52.5" lengthAdjust="spacingAndGlyphs">Wire PN</text>
<text x="554.0" y="416.2" font-family='"Liberation Sans", sans-serif' font-size="14.5" fill="#222" textLength="70.4" lengthAdjust="spacingAndGlyphs">conductor</text>
<text x="639.0" y="416.2" font-family='"Liberation Sans", sans-serif' font-size="14.5" fill="#222" textLength="38.0" lengthAdjust="spacingAndGlyphs">target</text>
<text x="273.3" y="448.6" font-family='"Liberation Sans", sans-serif' font-size="14.5" fill="#222" textLength="6.9" lengthAdjust="spacingAndGlyphs">1</text>
<polygon points="348.2,448.6 341.1,455.7 330.9,455.7 323.8,448.6 323.8,438.4 330.9,431.3 341.1,431.3 348.2,438.4" fill="#00d000" stroke="#111" stroke-width="1.2"/>
<text x="360.0" y="448.6" font-family='"Liberation Sans", sans-serif' font-size="14.5" fill="#222" textLength="13.7" lengthAdjust="spacingAndGlyphs">#1</text>
<text x="553.3" y="448.6" font-family='"Liberation Sans", sans-serif' font-size="14.5" fill="#222" textLength="6.9" lengthAdjust="spacingAndGlyphs">1</text>
<text x="639.0" y="448.6" font-family='"Liberation Sans", sans-serif' font-size="15.5" fill="#222" textLength="24.9" lengthAdjust="spacingAndGlyphs">J2:1</text>
<text x="273.3" y="480.6" font-family='"Liberation Sans", sans-serif' font-size="14.5" fill="#222" textLength="6.9" lengthAdjust="spacingAndGlyphs">2</text>
<polygon points="348.2,480.6 341.1,487.7 330.9,487.7 323.8,480.6 323.8,470.4 330.9,463.3 341.1,463.3 348.2,470.4" fill="#0000ff" stroke="#111" stroke-width="1.2"/>
<text x="360.0" y="480.6" font-family='"Liberation Sans", sans-serif' font-size="14.5" fill="#222" textLength="13.7" lengthAdjust="spacingAndGlyphs">#2</text>
<text x="553.3" y="480.6" font-family='"Liberation Sans", sans-serif' font-size="14.5" fill="#222" textLength="6.9" lengthAdjust="spacingAndGlyphs">2</text>
<text x="639.0" y="480.6" font-family='"Liberation Sans", sans-serif' font-size="15.5" fill="#222" textLength="24.9" lengthAdjust="spacingAndGlyphs">J2:2</text>
<text x="273.3" y="512.6" font-family='"Liberation Sans", sans-serif' font-size="14.5" fill="#222" textLength="6.9" lengthAdjust="spacingAndGlyphs">3</text>
<polygon points="348.2,512.6 341.1,519.7 330.9,519.7 323.8,512.6 323.8,502.4 330.9,495.3 341.1,495.3 348.2,502.4" fill="#ff0000" stroke="#111" stroke-width="1.2"/>
<text x="360.0" y="512.6" font-family='"Liberation Sans", sans-serif' font-size="14.5" fill="#222" textLength="13.7" lengthAdjust="spacingAndGlyphs">#3</text>
<text x="553.3" y="512.6" font-family='"Liberation Sans", sans-serif' font-size="14.5" fill="#222" textLength="6.9" lengthAdjust="spacingAndGlyphs">3</text>
<text x="639.0" y="512.6" font-family='"Liberation Sans", sans-serif' font-size="15.5" fill="#222" textLength="24.9" lengthAdjust="spacingAndGlyphs">J2:3</text>
<text x="273.3" y="544.6" font-family='"Liberation Sans", sans-serif' font-size="14.5" fill="#222" textLength="6.9" lengthAdjust="spacingAndGlyphs">4</text>
<polygon points="348.2,544.6 341.1,551.7 330.9,551.7 323.8,544.6 323.8,534.4 330.9,527.3 341.1,527.3 348.2,534.4" fill="#ffffff" stroke="#111" stroke-width="1.2"/>
<text x="360.0" y="544.6" font-family='"Liberation Sans", sans-serif' font-size="14.5" fill="#222" textLength="20.6" lengthAdjust="spacingAndGlyphs">#16</text>
<text x="553.3" y="544.6" font-family='"Liberation Sans", sans-serif' font-size="14.5" fill="#222" textLength="6.9" lengthAdjust="spacingAndGlyphs">8</text>
<text x="639.0" y="544.6" font-family='"Liberation Sans", sans-serif' font-size="15.5" fill="#222" textLength="35.9" lengthAdjust="spacingAndGlyphs">SP1:1</text>
<text x="273.3" y="576.6" font-family='"Liberation Sans", sans-serif' font-size="14.5" fill="#222" textLength="6.9" lengthAdjust="spacingAndGlyphs">5</text>
<rect x="2026.7" y="81.4" width="30" height="32.5" fill="#e0e0e0"/>
<line x1="2026.7" y1="81.4" x2="2048" y2="81.4" stroke="#1c1c1c" stroke-width="2"/>
<line x1="2026.7" y1="113.9" x2="2048" y2="113.9" stroke="#1c1c1c" stroke-width="2"/>
<line x1="2026.7" y1="146.7" x2="2048" y2="146.7" stroke="#1c1c1c" stroke-width="2"/>
<line x1="2026.7" y1="178.9" x2="2048" y2="178.9" stroke="#1c1c1c" stroke-width="2"/>
<line x1="2026.7" y1="211" x2="2048" y2="211" stroke="#1c1c1c" stroke-width="2"/>
<line x1="2026.7" y1="242.5" x2="2048" y2="242.5" stroke="#1c1c1c" stroke-width="2"/>
<line x1="2026.7" y1="274.8" x2="2048" y2="274.8" stroke="#1c1c1c" stroke-width="2"/>
<line x1="2026.7" y1="307.6" x2="2048" y2="307.6" stroke="#1c1c1c" stroke-width="2"/>
<line x1="2026.7" y1="340.4" x2="2048" y2="340.4" stroke="#1c1c1c" stroke-width="2"/>
<line x1="2026.7" y1="372.7" x2="2048" y2="372.7" stroke="#1c1c1c" stroke-width="2"/>
<line x1="2026.7" y1="404" x2="2048" y2="404" stroke="#1c1c1c" stroke-width="2"/>
<line x1="2026.7" y1="436.3" x2="2048" y2="436.3" stroke="#1c1c1c" stroke-width="2"/>
<line x1="2026.7" y1="468.6" x2="2048" y2="468.6" stroke="#1c1c1c" stroke-width="2"/>
<line x1="2026.7" y1="501.1" x2="2048" y2="501.1" stroke="#1c1c1c" stroke-width="2"/>
<line x1="2026.7" y1="543.5" x2="2048" y2="543.5" stroke="#1c1c1c" stroke-width="2"/>
<line x1="2026.7" y1="81.4" x2="2026.7" y2="543.5" stroke="#1c1c1c" stroke-width="2"/>
<text x="2031.0" y="103.0" font-family='"Liberation Sans", sans-serif' font-size="14.5" fill="#222" textLength="20.0" lengthAdjust="spacingAndGlyphs">Pin</text>
<text x="2031.0" y="133.9" font-family='"Liberation Sans", sans-serif' font-size="14.5" fill="#222" textLength="6.9" lengthAdjust="spacingAndGlyphs">1</text>
<text x="2031.0" y="166.7" font-family='"Liberation Sans", sans-serif' font-size="14.5" fill="#222" textLength="6.9" lengthAdjust="spacingAndGlyphs">2</text>
<text x="2031.0" y="198.9" font-family='"Liberation Sans", sans-serif' font-size="14.5" fill="#222" textLength="6.9" lengthAdjust="spacingAndGlyphs">3</text>
<text x="2031.0" y="231.0" font-family='"Liberation Sans", sans-serif' font-size="14.5" fill="#222" textLength="6.9" lengthAdjust="spacingAndGlyphs">4</text>
<text x="2031.0" y="262.5" font-family='"Liberation Sans", sans-serif' font-size="14.5" fill="#222" textLength="6.9" lengthAdjust="spacingAndGlyphs">5</text>
<text x="2031.0" y="294.8" font-family='"Liberation Sans", sans-serif' font-size="14.5" fill="#222" textLength="6.9" lengthAdjust="spacingAndGlyphs">6</text>
<text x="2031.0" y="327.6" font-family='"Liberation Sans", sans-serif' font-size="14.5" fill="#222" textLength="6.9" lengthAdjust="spacingAndGlyphs">7</text>
<text x="2031.0" y="360.4" font-family='"Liberation Sans", sans-serif' font-size="14.5" fill="#222" textLength="6.9" lengthAdjust="spacingAndGlyphs">8</text>
<text x="2031.0" y="392.7" font-family='"Liberation Sans", sans-serif' font-size="14.5" fill="#222" textLength="6.9" lengthAdjust="spacingAndGlyphs">9</text>
<text x="2031.0" y="425.5" font-family='"Liberation Sans", sans-serif' font-size="18.5" fill="#222" textLength="17.5" lengthAdjust="spacingAndGlyphs">10</text>
<text x="2031.0" y="457.8" font-family='"Liberation Sans", sans-serif' font-size="18.5" fill="#222" textLength="16.3" lengthAdjust="spacingAndGlyphs">11</text>
<text x="2031.0" y="488.6" font-family='"Liberation Sans", sans-serif' font-size="14.5" fill="#222" textLength="13.7" lengthAdjust="spacingAndGlyphs">12</text>
<text x="2040.5" y="533.0" font-family='"Liberation Sans", sans-serif' font-size="31" font-weight="bold" fill="#111">D</text>
<rect x="1876.1" y="845.5" width="180" height="30.5" fill="#e0e0e0"/>
<rect x="1928" y="877" width="33" height="160" fill="#f6f6f6"/>
<line x1="1927.6" y1="876" x2="1927.6" y2="1030" stroke="#dadada" stroke-width="1.5"/>
<line x1="1876.1" y1="845.5" x2="2048" y2="845.5" stroke="#1c1c1c" stroke-width="2"/>
<line x1="1876.1" y1="876" x2="2048" y2="876" stroke="#1c1c1c" stroke-width="2"/>
<line x1="1876.1" y1="908.7" x2="2048" y2="908.7" stroke="#1c1c1c" stroke-width="2"/>
<line x1="1876.1" y1="941.1" x2="2048" y2="941.1" stroke="#1c1c1c" stroke-width="2"/>
<line x1="1876.1" y1="973.7" x2="2048" y2="973.7" stroke="#1c1c1c" stroke-width="2"/>
<line x1="1876.1" y1="1006.2" x2="2048" y2="1006.2" stroke="#1c1c1c" stroke-width="2"/>
<line x1="1876.1" y1="845.5" x2="1876.1" y2="1030" stroke="#1c1c1c" stroke-width="2"/>
<line x1="1961.4" y1="845.5" x2="1961.4" y2="1030" stroke="#1c1c1c" stroke-width="2"/>
<text x="1881.0" y="865.0" font-family='"Liberation Sans", sans-serif' font-size="14.5" fill="#222" textLength="20.0" lengthAdjust="spacingAndGlyphs">Pin</text>
<text x="1967.2" y="865.0" font-family='"Liberation Sans", sans-serif' font-size="14.5" fill="#222" textLength="36.0" lengthAdjust="spacingAndGlyphs">signal</text>
<text x="1881.0" y="898.0" font-family='"Liberation Sans", sans-serif' font-size="14.5" fill="#222" textLength="6.9" lengthAdjust="spacingAndGlyphs">1</text>
<polygon points="1955.7,897.2 1948.6,904.3 1938.4,904.3 1931.3,897.2 1931.3,887.0 1938.4,879.9 1948.6,879.9 1955.7,887.0" fill="#ffaa00" stroke="#111" stroke-width="1.2"/>
<text x="1967.2" y="898.0" font-family='"Liberation Sans", sans-serif' font-size="14.5" fill="#222" textLength="20.6" lengthAdjust="spacingAndGlyphs">#15</text>
<text x="1881.0" y="930.4" font-family='"Liberation Sans", sans-serif' font-size="14.5" fill="#222" textLength="6.9" lengthAdjust="spacingAndGlyphs">2</text>
<polygon points="1955.7,929.7 1948.6,936.8 1938.4,936.8 1931.3,929.7 1931.3,919.5 1938.4,912.4 1948.6,912.4 1955.7,919.5" fill="#ff00ff" stroke="#111" stroke-width="1.2"/>
<text x="1967.2" y="930.4" font-family='"Liberation Sans", sans-serif' font-size="14.5" fill="#222" textLength="20.6" lengthAdjust="spacingAndGlyphs">#14</text>
<text x="1881.0" y="962.8" font-family='"Liberation Sans", sans-serif' font-size="14.5" fill="#222" textLength="6.9" lengthAdjust="spacingAndGlyphs">3</text>
<polygon points="1955.7,962.2 1948.6,969.3 1938.4,969.3 1931.3,962.2 1931.3,952.0 1938.4,944.9 1948.6,944.9 1955.7,952.0" fill="#000000" stroke="#111" stroke-width="1.2"/>
<text x="1967.2" y="962.8" font-family='"Liberation Sans", sans-serif' font-size="14.5" fill="#222" textLength="20.6" lengthAdjust="spacingAndGlyphs">#19</text>
<text x="1881.0" y="995.2" font-family='"Liberation Sans", sans-serif' font-size="14.5" fill="#222" textLength="6.9" lengthAdjust="spacingAndGlyphs">4</text>
<polygon points="1955.7,994.7 1948.6,1001.8 1938.4,1001.8 1931.3,994.7 1931.3,984.5 1938.4,977.4 1948.6,977.4 1955.7,984.5" fill="#ffff00" stroke="#111" stroke-width="1.2"/>
<text x="1967.2" y="995.2" font-family='"Liberation Sans", sans-serif' font-size="14.5" fill="#222" textLength="20.6" lengthAdjust="spacingAndGlyphs">#19</text>
<text x="1881.0" y="1028.0" font-family='"Liberation Sans", sans-serif' font-size="14.5" fill="#222" textLength="6.9" lengthAdjust="spacingAndGlyphs">5</text>
</svg>
<div id="dlg"></div>
<svg width="2048" height="1030" viewBox="0 0 2048 1030">
<rect x="9" y="589" width="1321" height="53.2" fill="#3b3b3b"/>
<rect x="9" y="642.2" width="1321" height="400" fill="#f0f0f0"/>
<line x1="9.5" y1="642" x2="9.5" y2="1030" stroke="#4d4d4d" stroke-width="1"/>
<line x1="1329.5" y1="642" x2="1329.5" y2="1030" stroke="#4d4d4d" stroke-width="1"/>
<path d="M29.3,609.2 H39.5 L38.6,612.4 H32.4 L31.7,614.6 H37.5 L36.6,617.7 H30.8 L29.7,623.9 H36.2 L35.2,627.4 H24 Z" fill="#e9493b"/>
<g transform="translate(37,619.6) skewX(-12)"><text x="0" y="0" font-family='"Liberation Sans", sans-serif' font-size="22.5" font-weight="bold" fill="#e9493b" textLength="12" lengthAdjust="spacingAndGlyphs">3</text></g>
<ellipse cx="46.4" cy="625.3" rx="3.3" ry="2.2" fill="#e9493b"/>
<text x="58.0" y="624.6" font-family='"Liberation Sans", sans-serif' font-size="21.5" fill="#f2f2f2" textLength="164.4" lengthAdjust="spacingAndGlyphs">Dash Configurator</text>
<line x1="1121.5" y1="615.5" x2="1139" y2="615.5" stroke="#e0e0e0" stroke-width="1.2"/>
<rect x="1200.5" y="607.3" width="17" height="17" fill="none" stroke="#e0e0e0" stroke-width="1.2"/>
<path d="M1281,607 L1298.3,624.3 M1298.3,607 L1281,624.3" stroke="#e0e0e0" stroke-width="1.2"/>
<path d="M44,675.5 H33.5 V837.9 H240.3 V675.5 H98" fill="none" stroke="#dcdcdc" stroke-width="1.2"/>
<text x="48.3" y="683.2" font-family='"Liberation Sans", sans-serif' font-size="20" fill="#111" textLength="45.0" lengthAdjust="spacingAndGlyphs">Mode</text>
<path d="M266,675.5 H255.5 V1040 M1305.5,1040 V675.5 H368" fill="none" stroke="#dcdcdc" stroke-width="1.2"/>
<text x="270.6" y="683.2" font-family='"Liberation Sans", sans-serif' font-size="20" fill="#111" textLength="93.5" lengthAdjust="spacingAndGlyphs">Dash Setup</text>
<circle cx="65.5" cy="723.2" r="10.5" fill="#fff" stroke="#333" stroke-width="1.6"/>
<text x="84.5" y="730.5" font-family='"Liberation Sans", sans-serif' font-size="20" fill="#111" textLength="59.5" lengthAdjust="spacingAndGlyphs">Project</text>
<circle cx="65.5" cy="762.6" r="10.5" fill="#fff" stroke="#333" stroke-width="1.6"/>
<text x="84.5" y="769.9" font-family='"Liberation Sans", sans-serif' font-size="20" fill="#111" textLength="79.0" lengthAdjust="spacingAndGlyphs">Assembly</text>
<circle cx="65.5" cy="802.0" r="10.5" fill="#fff" stroke="#333" stroke-width="1.6"/>
<circle cx="65.5" cy="802.0" r="5.5" fill="#333"/>
<text x="84.5" y="809.3" font-family='"Liberation Sans", sans-serif' font-size="20" fill="#111" textLength="105.4" lengthAdjust="spacingAndGlyphs">Active Sheet</text>
<text x="276.8" y="739.8" font-family='"Liberation Sans", sans-serif' font-size="20" fill="#111" textLength="59.6" lengthAdjust="spacingAndGlyphs">Source</text>
<rect x="354.5" y="716.8" width="489" height="32.5" fill="#f0f0f0" stroke="#7a7a7a" stroke-width="1.2"/>
<text x="361.0" y="740.0" font-family='"Liberation Sans", sans-serif' font-size="20" fill="#111" textLength="10.0" lengthAdjust="spacingAndGlyphs">1</text>
<rect x="279.5" y="786.0" width="123.3" height="35.3" fill="#e1e1e1" stroke="#adadad" stroke-width="1.2"/>
<text x="341.2" y="810.5" font-family='"Liberation Sans", sans-serif' font-size="20" fill="#111" textLength="32.0" lengthAdjust="spacingAndGlyphs" text-anchor="middle">Add</text>
<rect x="279.5" y="835.5" width="123.3" height="35.3" fill="#e1e1e1" stroke="#adadad" stroke-width="1.2"/>
<text x="341.2" y="860.0" font-family='"Liberation Sans", sans-serif' font-size="20" fill="#111" textLength="67.0" lengthAdjust="spacingAndGlyphs" text-anchor="middle">Remove</text>
<rect x="279.5" y="885.0" width="123.3" height="35.3" fill="#e1e1e1" stroke="#adadad" stroke-width="1.2"/>
<text x="341.2" y="909.5" font-family='"Liberation Sans", sans-serif' font-size="20" fill="#111" textLength="84.0" lengthAdjust="spacingAndGlyphs" text-anchor="middle">Edit Name</text>
<rect x="279.5" y="934.5" width="123.3" height="35.3" fill="#e1e1e1" stroke="#adadad" stroke-width="1.2"/>
<text x="341.2" y="959.0" font-family='"Liberation Sans", sans-serif' font-size="20" fill="#111" textLength="82.1" lengthAdjust="spacingAndGlyphs" text-anchor="middle">Load CSV</text>
<rect x="279.5" y="984.0" width="123.3" height="35.3" fill="#e1e1e1" stroke="#adadad" stroke-width="1.2"/>
<text x="341.2" y="1008.5" font-family='"Liberation Sans", sans-serif' font-size="20" fill="#111" textLength="94.0" lengthAdjust="spacingAndGlyphs" text-anchor="middle">Export CSV</text>
<text x="439.7" y="783.6" font-family='"Liberation Sans", sans-serif' font-size="20" fill="#111" textLength="127.3" lengthAdjust="spacingAndGlyphs">Dash Variables</text>
<text x="872.2" y="784.0" font-family='"Liberation Sans", sans-serif' font-size="20" fill="#111" textLength="62.5" lengthAdjust="spacingAndGlyphs">Dashes</text>
<rect x="441.7" y="793.7" width="401.5" height="177.5" fill="#ababab" stroke="#2b2b2b" stroke-width="2"/>
<rect x="443" y="795" width="399" height="109.7" fill="#fff"/>
<rect x="443" y="867" width="41" height="37.7" fill="#bedcf2"/>
<rect x="484.5" y="867" width="357.5" height="37.7" fill="#0078d7"/>
<path d="M443,829.5 H842 M443,867 H842 M484,795 V904.7 M612.2,795 V904.7" stroke="#a0a0a0" stroke-width="1.2"/>
<path d="M455,879.5 L465,887.5 L455,895.5 Z" fill="#404040"/>
<text x="497.0" y="820.0" font-family='"Liberation Sans", sans-serif' font-size="20" fill="#111" textLength="40.3" lengthAdjust="spacingAndGlyphs">Type</text>
<text x="625.5" y="820.0" font-family='"Liberation Sans", sans-serif' font-size="20" fill="#111" textLength="46.5" lengthAdjust="spacingAndGlyphs">Name</text>
<text x="490.5" y="855.5" font-family='"Liberation Sans", sans-serif' font-size="20" fill="#111" textLength="55.0" lengthAdjust="spacingAndGlyphs">Length</text>
<text x="618.5" y="855.5" font-family='"Liberation Sans", sans-serif' font-size="20" fill="#111" textLength="154.0" lengthAdjust="spacingAndGlyphs">Aux System Length</text>
<text x="490.5" y="892.8" font-family='"Liberation Sans", sans-serif' font-size="20" fill="#fff" textLength="95.0" lengthAdjust="spacingAndGlyphs">PartNumber</text>
<text x="618.5" y="892.8" font-family='"Liberation Sans", sans-serif' font-size="20" fill="#fff" textLength="138.5" lengthAdjust="spacingAndGlyphs">Aux System Parts</text>
<rect x="873.7" y="793.7" width="403.6" height="260" fill="#ababab" stroke="#2b2b2b" stroke-width="2"/>
<rect x="875" y="795" width="401" height="184.7" fill="#fff"/>
<rect x="916.8" y="904.9" width="178.4" height="37" fill="#0078d7"/>
<path d="M875,829.4 H1276 M875,867 H1276 M875,904.4 H1276 M875,942.2 H1276 M916.3,795 V979.7 M1095.7,795 V979.7" stroke="#a0a0a0" stroke-width="1.2"/>
<path d="M886,916.5 L896,924.5 L886,932.5 Z" fill="#404040"/>
<path d="M894.5,956.5 L894.5,966.5 M889.8,959 L899.2,964 M889.8,964 L899.2,959" stroke="#555" stroke-width="2.2"/>
<text x="929.3" y="820.0" font-family='"Liberation Sans", sans-serif' font-size="20" fill="#111" textLength="41.6" lengthAdjust="spacingAndGlyphs">Dash</text>
<text x="1108.7" y="820.0" font-family='"Liberation Sans", sans-serif' font-size="20" fill="#111" textLength="45.0" lengthAdjust="spacingAndGlyphs">Value</text>
<text x="922.0" y="855.5" font-family='"Liberation Sans", sans-serif' font-size="20" fill="#111" textLength="12.0" lengthAdjust="spacingAndGlyphs">A</text>
<text x="1101.9" y="855.5" font-family='"Liberation Sans", sans-serif' font-size="20" fill="#111" textLength="83.0" lengthAdjust="spacingAndGlyphs">DT04-12P</text>
<text x="922.0" y="893.1" font-family='"Liberation Sans", sans-serif' font-size="20" fill="#111" textLength="12.0" lengthAdjust="spacingAndGlyphs">B</text>
<text x="1101.9" y="893.1" font-family='"Liberation Sans", sans-serif' font-size="20" fill="#111" textLength="96.0" lengthAdjust="spacingAndGlyphs">DT04-12PA</text>
<text x="922.0" y="930.7" font-family='"Liberation Sans", sans-serif' font-size="20" fill="#fff" textLength="13.0" lengthAdjust="spacingAndGlyphs">C</text>
<text x="1101.9" y="930.7" font-family='"Liberation Sans", sans-serif' font-size="20" fill="#111" textLength="95.0" lengthAdjust="spacingAndGlyphs">DT04-12PB</text>
</svg>
</body></html>
